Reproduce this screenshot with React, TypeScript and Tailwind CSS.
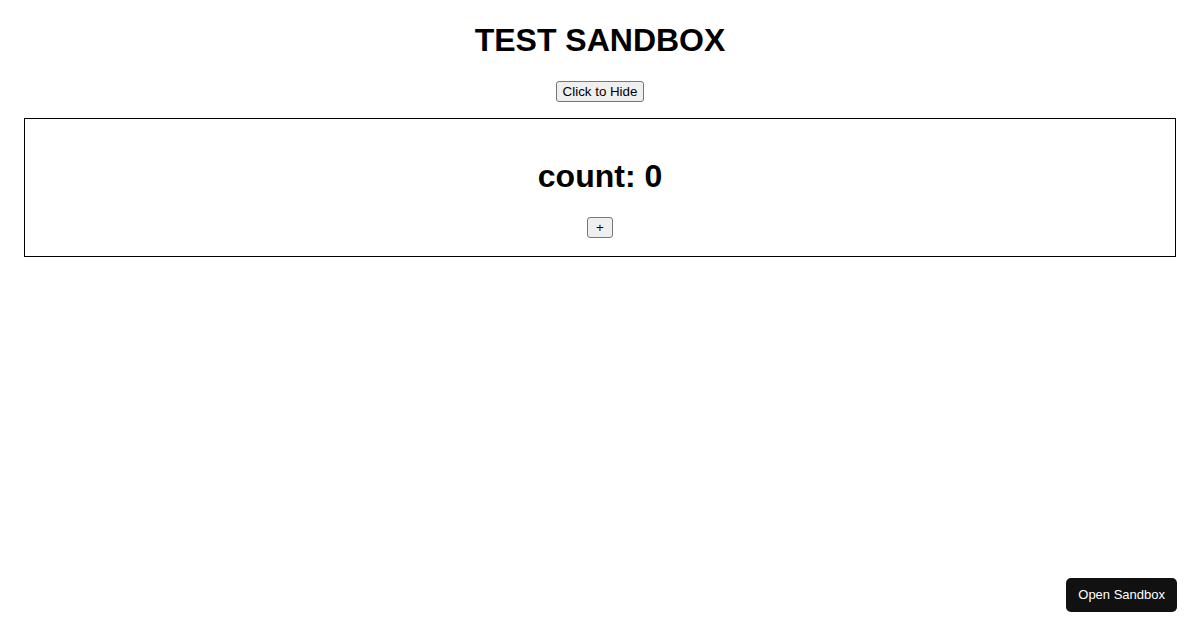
import { useState } from "react";

const sysBtn =
  "h-[21px] bg-[#efefef] border border-[#767676] rounded-[3px] text-[13.33px] leading-[normal] text-black";

const Counter = () => {
  const [count, setCount] = useState(0);
  return (
    <div className="mx-6 border border-black flex flex-col items-center pt-[39px] pb-[18px]">
      <h2 className="text-[32px] font-bold leading-[normal] mb-[22px]">count: {count}</h2>
      <button className={`${sysBtn} px-2`} onClick={() => setCount(count + 1)}>
        +
      </button>
    </div>
  );
};

export default function App() {
  const [show, setShow] = useState(true);

  return (
    <div className="min-h-screen bg-white text-black font-['Liberation_Sans',Arial,sans-serif]">
      <div className="flex flex-col items-center">
        <h1 className="text-[32px] font-bold leading-[normal] mt-[22px] mb-[22px]">TEST SANDBOX</h1>
        <button className={`${sysBtn} px-[6px]`} onClick={() => setShow(!show)}>
          {show ? "Click to Hide" : "Click to Show"}
        </button>
      </div>
      <div className="mt-4">{show && <Counter />}</div>

      <button className="fixed right-[23px] bottom-[18px] h-[34px] px-3 rounded-[5px] bg-[#111111] text-white text-[13px]">
        Open Sandbox
      </button>
    </div>
  );
}
